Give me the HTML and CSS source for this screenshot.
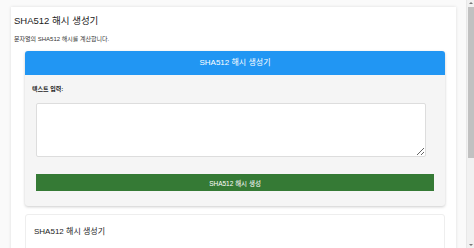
FILE: index.html
```html
<!DOCTYPE html>
<html lang="ko">
<head>
    <meta charset="UTF-8">
    <meta name="viewport" content="width=device-width, initial-scale=1.0">
    <title>SHA512 해시 생성기</title>
    <link rel="stylesheet" href="styles.css">
</head>
<body>
    <div class="page">
        <div class="container">
            <h1>SHA512 해시 생성기</h1>
            <p class="desc">문자열의 SHA512 해시를 계산합니다.</p>

            <div class="card">
                <div class="card-header">SHA512 해시 생성기</div>
                <div class="card-body">
                    <label for="inputText">텍스트 입력:</label>
                    <textarea id="inputText"></textarea>
                    <button id="hashButton">SHA512 해시 생성</button>
                </div>
            </div>

            <div class="card info">
                <h2>SHA512 해시 생성기</h2>
                <p class="info-text"></p>
            </div>
        </div>
    </div>
    <div class="scrollbar" aria-hidden="true">
        <span class="arrow up"></span>
        <div class="thumb"></div>
        <span class="arrow down"></span>
    </div>
</body>
</html>
```

FILE: styles.css
```css
html, body {
    height: 100%;
}
body {
    font-family: "Liberation Sans", Arial, "Noto Sans CJK KR", sans-serif;
    margin: 0;
    overflow: hidden;
    display: flex;
    background-color: #fafafa;
    color: #333;
}
.page {
    flex: 1;
    height: 100vh;
    overflow: hidden;
    padding: 7px 10px 4px 11px;
    box-sizing: border-box;
}
.scrollbar {
    width: 8px;
    height: 100vh;
    background-color: #f1f1f1;
    display: flex;
    flex-direction: column;
    align-items: center;
    border-left: 1px solid #e8e8e8;
    box-sizing: border-box;
}
.arrow {
    width: 0;
    height: 0;
    border-left: 2px solid transparent;
    border-right: 2px solid transparent;
    margin: 2px 0;
}
.arrow.up {
    border-bottom: 2px solid #777;
}
.arrow.down {
    border-top: 2px solid #777;
    margin-top: auto;
}
.thumb {
    width: 6px;
    height: 151px;
    margin-top: 1px;
    background-color: #c1c1c1;
}
.container {
    background-color: #fff;
    padding: 7px 3px 6px;
    box-shadow: 0 0 3px rgba(0,0,0,0.12);
}
h1 {
    font-size: 9.5px;
    font-weight: normal;
    margin: 0;
    line-height: 14px;
    color: #222;
}
.desc {
    font-size: 6px;
    margin: 7px 0 7px;
    line-height: 9px;
    color: #333;
}
.card {
    margin: 0 8px 8px 11px;
    border-radius: 3px;
    background-color: #f5f5f5;
    box-shadow: 0 1px 3px rgba(0,0,0,0.2);
    overflow: hidden;
}
.card-header {
    background-color: #2196F3;
    color: #fff;
    text-align: center;
    font-size: 8px;
    height: 24px;
    line-height: 24px;
}
.card-body {
    padding: 10px 11px 15px;
}
.card-body label {
    display: block;
    font-size: 6px;
    font-weight: bold;
    line-height: 9px;
    margin-bottom: 9px;
    margin-left: -4px;
    color: #222;
}
.card-body textarea {
    display: block;
    box-sizing: border-box;
    width: calc(100% - 8px);
    height: 54px;
    border: 1px solid #ddd;
    border-radius: 2px;
    background-color: #fff;
    margin-bottom: 17px;
}
.card-body button {
    display: block;
    width: 100%;
    height: 17px;
    padding: 0;
    border: none;
    background-color: #357a35;
    color: #fff;
    font-family: inherit;
    font-size: 6.5px;
}
.info {
    background-color: #fff;
    height: 160px;
    padding: 11px 8px;
    box-sizing: border-box;
    border: 1px solid #eee;
    box-shadow: none;
}
.info h2 {
    font-size: 8px;
    font-weight: normal;
    margin: 0;
    line-height: 12px;
    color: #222;
}
```
